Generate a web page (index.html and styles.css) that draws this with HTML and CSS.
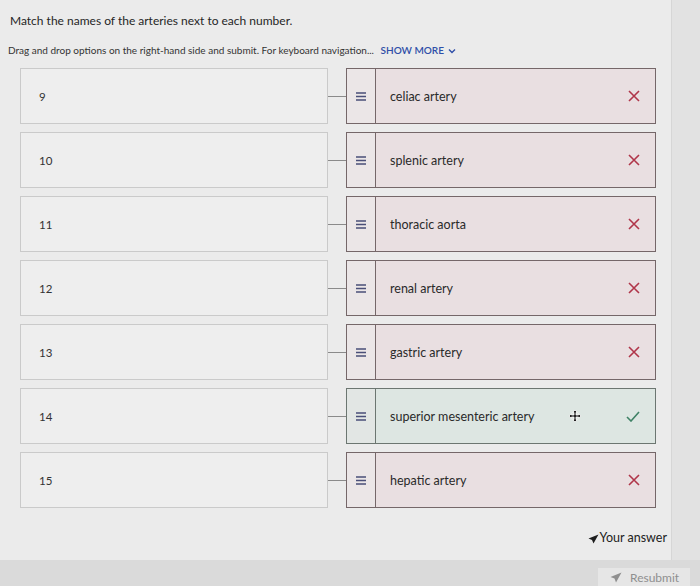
FILE: index.html
```html
<!DOCTYPE html>
<html lang="en">
<head>
	<meta charset="UTF-8">
	<title>Match the arteries</title>
	<link rel="stylesheet" href="styles.css">
</head>
<body>
	<div class="card">
		<p class="prompt">Match the names of the arteries next to each number.</p>
		<p class="hint">Drag and drop options on the right-hand side and submit. For keyboard navigation... <a class="more">SHOW MORE <svg width="8" height="6" viewBox="0 0 8 6"><path d="M1 1.5 L4 4.5 L7 1.5" fill="none" stroke="#2f4fa8" stroke-width="1.4"/></svg></a></p>
		<ul class="rows">
			<li class="row">
				<div class="slot"><span class="num">9</span></div>
				<span class="link"></span>
				<div class="answer wrong">
					<span class="grip"><svg width="10" height="9" viewBox="0 0 10 9"><path d="M0 1h10M0 4.5h10M0 8h10" stroke="#4a4f78" stroke-width="1.3"/></svg></span>
					<span class="label">celiac artery</span>
					<svg class="mark" width="12" height="12" viewBox="0 0 12 12"><path d="M1 1L11 11M11 1L1 11" stroke="#b0364a" stroke-width="1.6"/></svg>
				</div>
			</li>
			<li class="row">
				<div class="slot"><span class="num">10</span></div>
				<span class="link"></span>
				<div class="answer wrong">
					<span class="grip"><svg width="10" height="9" viewBox="0 0 10 9"><path d="M0 1h10M0 4.5h10M0 8h10" stroke="#4a4f78" stroke-width="1.3"/></svg></span>
					<span class="label">splenic artery</span>
					<svg class="mark" width="12" height="12" viewBox="0 0 12 12"><path d="M1 1L11 11M11 1L1 11" stroke="#b0364a" stroke-width="1.6"/></svg>
				</div>
			</li>
			<li class="row">
				<div class="slot"><span class="num">11</span></div>
				<span class="link"></span>
				<div class="answer wrong">
					<span class="grip"><svg width="10" height="9" viewBox="0 0 10 9"><path d="M0 1h10M0 4.5h10M0 8h10" stroke="#4a4f78" stroke-width="1.3"/></svg></span>
					<span class="label">thoracic aorta</span>
					<svg class="mark" width="12" height="12" viewBox="0 0 12 12"><path d="M1 1L11 11M11 1L1 11" stroke="#b0364a" stroke-width="1.6"/></svg>
				</div>
			</li>
			<li class="row">
				<div class="slot"><span class="num">12</span></div>
				<span class="link"></span>
				<div class="answer wrong">
					<span class="grip"><svg width="10" height="9" viewBox="0 0 10 9"><path d="M0 1h10M0 4.5h10M0 8h10" stroke="#4a4f78" stroke-width="1.3"/></svg></span>
					<span class="label">renal artery</span>
					<svg class="mark" width="12" height="12" viewBox="0 0 12 12"><path d="M1 1L11 11M11 1L1 11" stroke="#b0364a" stroke-width="1.6"/></svg>
				</div>
			</li>
			<li class="row">
				<div class="slot"><span class="num">13</span></div>
				<span class="link"></span>
				<div class="answer wrong">
					<span class="grip"><svg width="10" height="9" viewBox="0 0 10 9"><path d="M0 1h10M0 4.5h10M0 8h10" stroke="#4a4f78" stroke-width="1.3"/></svg></span>
					<span class="label">gastric artery</span>
					<svg class="mark" width="12" height="12" viewBox="0 0 12 12"><path d="M1 1L11 11M11 1L1 11" stroke="#b0364a" stroke-width="1.6"/></svg>
				</div>
			</li>
			<li class="row">
				<div class="slot"><span class="num">14</span></div>
				<span class="link"></span>
				<div class="answer right">
					<span class="grip"><svg width="10" height="9" viewBox="0 0 10 9"><path d="M0 1h10M0 4.5h10M0 8h10" stroke="#4a4f78" stroke-width="1.3"/></svg></span>
					<span class="label">superior mesenteric artery</span>
					<!-- mouse move cursor caught in the shot -->
					<svg class="cursor" width="14" height="14" viewBox="0 0 14 14"><path d="M7 1L9.5 3.5H8V6H10.5V4.5L13 7L10.5 9.5V8H8V10.5H9.5L7 13L4.5 10.5H6V8H3.5V9.5L1 7L3.5 4.5V6H6V3.5H4.5Z" fill="#222" stroke="#fff" stroke-width="0.8"/></svg>
					<svg class="mark" width="14" height="11" viewBox="0 0 14 11"><path d="M1 6L5 10L13 1" fill="none" stroke="#3f8266" stroke-width="1.6"/></svg>
				</div>
			</li>
			<li class="row">
				<div class="slot"><span class="num">15</span></div>
				<span class="link"></span>
				<div class="answer wrong">
					<span class="grip"><svg width="10" height="9" viewBox="0 0 10 9"><path d="M0 1h10M0 4.5h10M0 8h10" stroke="#4a4f78" stroke-width="1.3"/></svg></span>
					<span class="label">hepatic artery</span>
					<svg class="mark" width="12" height="12" viewBox="0 0 12 12"><path d="M1 1L11 11M11 1L1 11" stroke="#b0364a" stroke-width="1.6"/></svg>
				</div>
			</li>
		</ul>
		<div class="result">
			<svg width="11" height="10" viewBox="0 0 11 10"><path d="M10.5 0.5L0.5 4.5L4 6ZM10.5 0.5L4 6L5.5 9.5Z" fill="#1d1d1d"/></svg>
			<span>Your answer</span>
		</div>
	</div>
	<div class="footer">
		<button class="resubmit">
			<svg width="12" height="11" viewBox="0 0 12 11"><path d="M11.5 0.5L0.5 5L4.5 6.5ZM11.5 0.5L4.5 6.5L6 10.5Z" fill="#8f8f8f"/></svg>
			Resubmit
		</button>
	</div>
</body>
</html>
```

FILE: styles.css
```css
* {
	margin: 0;
	padding: 0;
	list-style: none;
	box-sizing: border-box;
}
body {
	background-color: #e2e2e2;
	font-family: "Lato", "Noto Sans", sans-serif;
	color: #2b2b2b;
	height: 586px;
	overflow: hidden;
}
.card {
	width: 672px;
	height: 560px;
	padding: 13px 0 0 10px;
	background-color: #ebebeb;
	border-right: 1px solid #d6d6d6;
}
.prompt {
	font-size: 12px;
	line-height: 16px;
	color: #262626;
}
.hint {
	margin: 14px 0 0 -2px;
	font-size: 10px;
	line-height: 14px;
	color: #333;
}
.more {
	margin-left: 4px;
	color: #2f4fa8;
	font-weight: 600;
}
.more svg {
	margin-left: 2px;
	vertical-align: middle;
}

/* rows */
.rows {
	display: flex;
	flex-direction: column;
	gap: 8px;
	margin: 11px 0 0 10px;
}
.row {
	display: flex;
	align-items: center;
	height: 56px;
}
.slot {
	display: flex;
	align-items: center;
	width: 308px;
	height: 100%;
	padding-left: 18px;
	background-color: #eeeeee;
	border: 1px solid #cacaca;
}
.num {
	font-size: 11.5px;
	color: #333;
}
.link {
	width: 18px;
	height: 1px;
	background-color: #8a8a8a;
}
.answer {
	display: flex;
	align-items: center;
	width: 310px;
	height: 100%;
	border: 1.5px solid #756769;
}
.answer.wrong {
	background-color: #e9dfe1;
}
.answer.right {
	background-color: #dde6e2;
	border-color: #6c7671;
}
.grip {
	display: flex;
	align-items: center;
	justify-content: center;
	width: 29px;
	height: 100%;
	background-color: #ebe6e7;
	border-right: 1.5px solid #756769;
}
.answer.right .grip {
	background-color: #e2e6e4;
	border-color: #6c7671;
}
.label {
	flex: 1;
	padding-left: 14px;
	font-size: 12.5px;
	color: #2a2a2a;
}
.cursor {
	margin-right: 44px;
}
.mark {
	margin-right: 15px;
}

.result {
	display: flex;
	align-items: center;
	justify-content: flex-end;
	gap: 1px;
	margin: 22px 4px 0 0;
	font-size: 12.5px;
	color: #222;
}
.result svg {
	margin-top: 3px;
}

.footer {
	display: flex;
	justify-content: flex-end;
	height: 26px;
	padding: 8px 10px 0 0;
	background-color: #dadada;
}
.resubmit {
	display: flex;
	align-items: center;
	gap: 8px;
	width: 92px;
	height: 18px;
	padding-left: 12px;
	border: none;
	background-color: #e6e6e6;
	font-family: "Lato", "Noto Sans", sans-serif;
	font-size: 12px;
	color: #8f8f8f;
}
```
